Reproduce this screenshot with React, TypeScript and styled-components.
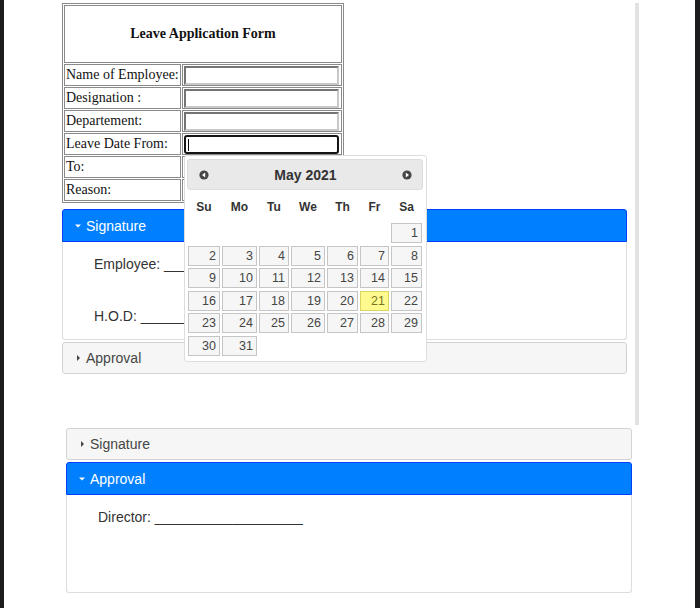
import React from "react";
import styled, { createGlobalStyle } from "styled-components";

const GlobalStyle = createGlobalStyle`
  html, body {
    margin: 0;
    padding: 0;
    background: #1c1c1e;
  }
`;

const formRows = [
  "Name of Employee:",
  "Designation :",
  "Departement:",
  "Leave Date From:",
  "To:",
  "Reason:",
];

const dayNames = ["Su", "Mo", "Tu", "We", "Th", "Fr", "Sa"];

export default function App() {
  return (
    <>
      <GlobalStyle />
      <Screen>
        <Frame>
          <FrameBody>
            <FormTable>
              <tbody>
                <tr>
                  <TitleCell colSpan={2}>Leave Application Form</TitleCell>
                </tr>
                {formRows.map((label) => (
                  <tr key={label}>
                    <LabelCell>{label}</LabelCell>
                    <InputCell>
                      <TextInput
                        type="text"
                        readOnly
                        $focused={label === "Leave Date From:"}
                      />
                    </InputCell>
                  </tr>
                ))}
              </tbody>
            </FormTable>

            <Accordion>
              <AccordionHeader $active>
                <Caret open />
                Signature
              </AccordionHeader>
              <Panel $height={98}>
                <SignLine>Employee: ___________________</SignLine>
                <SignLine $gap={35}>H.O.D: ___________________</SignLine>
              </Panel>
              <AccordionHeader $active={false}>
                <Caret open={false} />
                Approval
              </AccordionHeader>
            </Accordion>
          </FrameBody>

          <ScrollTrack />

          <DatePicker />
        </Frame>

        <SecondBlock>
          <AccordionHeader $active={false}>
            <Caret open={false} />
            Signature
          </AccordionHeader>
          <AccordionHeader $active>
            <Caret open />
            Approval
          </AccordionHeader>
          <Panel $height={98}>
            <SignLine>Director: ___________________</SignLine>
          </Panel>
        </SecondBlock>
      </Screen>
    </>
  );
}

function Caret({ open }: { open: boolean }) {
  return (
    <CaretIcon width="6" height="8" viewBox="0 0 6 8">
      {open ? (
        <path d="M0 2.5h6L3 5.5z" fill="currentColor" />
      ) : (
        <path d="M2 1v6l3-3z" fill="currentColor" />
      )}
    </CaretIcon>
  );
}

function NavIcon({ dir }: { dir: "prev" | "next" }) {
  return (
    <svg width="10" height="10" viewBox="0 0 10 10">
      <circle cx="5" cy="5" r="4.6" fill="#454545" />
      {dir === "prev" ? (
        <path d="M6.2 2.6v4.8L3 5z" fill="#fff" />
      ) : (
        <path d="M3.8 2.6v4.8L7 5z" fill="#fff" />
      )}
    </svg>
  );
}

function DatePicker() {
  // May 2021 starts on a Saturday
  const offset = 6;
  const slots: (number | null)[] = [];
  for (let i = 0; i < offset; i++) slots.push(null);
  for (let d = 1; d <= 31; d++) slots.push(d);

  return (
    <Picker>
      <PickerHeader>
        <NavIcon dir="prev" />
        <PickerTitle>May 2021</PickerTitle>
        <NavIcon dir="next" />
      </PickerHeader>
      <DayNameRow>
        {dayNames.map((name) => (
          <DayName key={name}>{name}</DayName>
        ))}
      </DayNameRow>
      <DayGrid>
        {slots.map((day, i) =>
          day === null ? (
            <span key={"blank" + i} />
          ) : (
            <DayCell key={day} $highlight={day === 21}>
              {day}
            </DayCell>
          )
        )}
      </DayGrid>
    </Picker>
  );
}

const Screen = styled.div`
  margin: 0 5px 0 4px;
  height: 608px;
  box-sizing: border-box;
  padding: 3px 0 0 58px;
  background: #fff;
  overflow: hidden;
`;

const Frame = styled.div`
  position: relative;
  display: flex;
  width: 577px;
  height: 422px;
`;

const FrameBody = styled.div`
  width: 565px;
  display: flex;
  flex-direction: column;
  align-items: flex-start;
`;

const ScrollTrack = styled.div`
  margin-left: 8px;
  width: 4px;
  background: #e2e2e2;
`;

const FormTable = styled.table`
  border-collapse: separate;
  border-spacing: 1px;
  border: 1px solid #8a8a8a;
  font-family: "Liberation Serif", "Times New Roman", serif;
  color: #111;
`;

const TitleCell = styled.td`
  box-sizing: border-box;
  height: 58px;
  border: 1px solid #8a8a8a;
  text-align: center;
  font-size: 14px;
  font-weight: bold;
`;

const LabelCell = styled.td`
  box-sizing: border-box;
  width: 117px;
  height: 22px;
  padding: 0 1px;
  border: 1px solid #8a8a8a;
  font-size: 14px;
  white-space: nowrap;
`;

const InputCell = styled.td`
  box-sizing: border-box;
  width: 160px;
  height: 22px;
  padding: 0 1px;
  border: 1px solid #8a8a8a;
`;

const TextInput = styled.input<{ $focused: boolean }>`
  display: block;
  box-sizing: border-box;
  width: 155px;
  height: 19px;
  margin: 0;
  padding: 0 2px;
  outline: none;
  border: ${(p) => (p.$focused ? "2px solid #141414" : "2px inset #c8c8c8")};
  border-radius: ${(p) => (p.$focused ? "3px" : "0")};
  background: ${(p) =>
    p.$focused
      ? "linear-gradient(#000, #000) no-repeat 2px 2px / 1px 12px, #fff"
      : "#fff"};
`;

const Accordion = styled.div`
  margin-top: 6px;
  width: 565px;
`;

const SecondBlock = styled.div`
  margin: 3px 0 0 4px;
  width: 566px;
`;

const AccordionHeader = styled.div<{ $active: boolean }>`
  display: flex;
  align-items: center;
  gap: 5px;
  box-sizing: border-box;
  height: ${(p) => (p.$active ? 33 : 32)}px;
  margin-top: 2px;
  padding-left: 12px;
  border: 1px solid ${(p) => (p.$active ? "#003eff" : "#d3d3d3")};
  border-radius: ${(p) => (p.$active ? "3px 3px 0 0" : "3px")};
  background: ${(p) => (p.$active ? "#007fff" : "#f6f6f6")};
  color: ${(p) => (p.$active ? "#fff" : "#454545")};
  font: 14px "Liberation Sans", Arial, sans-serif;

  &:first-child {
    margin-top: 0;
  }
`;

const CaretIcon = styled.svg`
  flex: none;
`;

const Panel = styled.div<{ $height: number }>`
  box-sizing: border-box;
  height: ${(p) => p.$height}px;
  padding: 14px 31px;
  border: 1px solid #dddddd;
  border-top: 0;
  border-radius: 0 0 3px 3px;
  background: #fff;
  color: #333;
  font: 14px "Liberation Sans", Arial, sans-serif;
`;

const SignLine = styled.div<{ $gap?: number }>`
  margin-top: ${(p) => p.$gap ?? 0}px;
  line-height: 17px;
  white-space: nowrap;
`;

const Picker = styled.div`
  position: absolute;
  left: 122px;
  top: 152px;
  box-sizing: border-box;
  width: 243px;
  height: 207px;
  padding: 3px 3px 5px 2px;
  border: 1px solid #dddddd;
  border-radius: 3px;
  background: #fff;
  font-family: "Liberation Sans", Arial, sans-serif;
`;

const PickerHeader = styled.div`
  display: flex;
  align-items: center;
  justify-content: space-between;
  box-sizing: border-box;
  height: 31px;
  padding: 0 10px 0 11px;
  border: 1px solid #dddddd;
  border-radius: 3px;
  background: #e9e9e9;
  color: #333;
`;

const PickerTitle = styled.span`
  font-size: 14px;
  font-weight: bold;
`;

const columns = "32px 35px 30px 34px 31px 29px 31px";

const DayNameRow = styled.div`
  display: grid;
  grid-template-columns: ${columns};
  column-gap: 2px;
  align-items: center;
  height: 33px;
  margin-left: 1px;
`;

const DayName = styled.span`
  text-align: center;
  font-size: 12px;
  font-weight: bold;
  color: #333;
`;

const DayGrid = styled.div`
  display: grid;
  grid-template-columns: ${columns};
  grid-auto-rows: 20px;
  column-gap: 2px;
  row-gap: 2.6px;
  margin-left: 1px;
`;

const DayCell = styled.span<{ $highlight: boolean }>`
  box-sizing: border-box;
  padding-right: 3px;
  border: 1px solid ${(p) => (p.$highlight ? "#dad55e" : "#c5c5c5")};
  background: ${(p) => (p.$highlight ? "#fffa90" : "#f6f6f6")};
  color: ${(p) => (p.$highlight ? "#777620" : "#454545")};
  font-size: 12.5px;
  line-height: 18px;
  text-align: right;
`;
